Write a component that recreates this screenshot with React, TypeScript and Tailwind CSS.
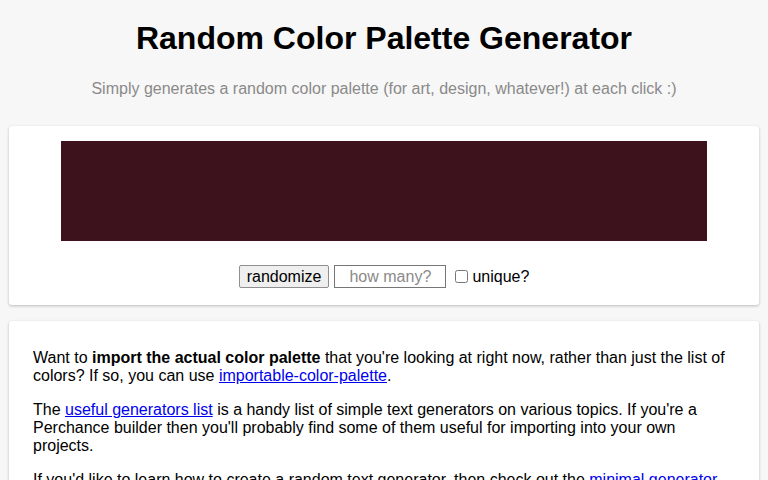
export default function App() {
  return (
    <div className="min-h-screen bg-[#f7f7f7] font-['Liberation_Sans',Arial,sans-serif] text-black">
      <h1 className="pt-[20px] text-center text-[32px] font-bold leading-[37px]">
        Random Color Palette Generator
      </h1>
      <p className="mt-[23px] text-center text-[16px] leading-[18px] text-[#8a8a8a]">
        Simply generates a random color palette (for art, design, whatever!) at each click :)
      </p>

      {/* palette card */}
      <div className="mx-[9px] mt-[28px] rounded-[3px] bg-white pt-[15px] pb-[17px] shadow-[0_1px_3px_rgba(0,0,0,0.25)]">
        <div className="mx-auto h-[100px] w-[646px] bg-[#3e121d]" />
        <div className="mt-[24px] flex items-center justify-center text-[16px]">
          <button className="h-[23px] rounded-[2px] border border-[#8f8f8f] bg-[#efefef] px-[7px] leading-[18px]">
            randomize
          </button>
          <input
            placeholder="how many?"
            className="ml-[5px] h-[23px] w-[112px] border border-[#767676] bg-white px-[2px] text-center text-[16px] placeholder:text-[#8a8a8a]"
          />
          <input type="checkbox" className="ml-[9px] h-[13px] w-[13px]" />
          <span className="ml-[4px] leading-[18px]">unique?</span>
        </div>
      </div>

      {/* info card */}
      <div className="mx-[9px] mt-[16px] rounded-[3px] bg-white px-[24px] pt-[28px] pb-[24px] text-[16px] leading-[18px] shadow-[0_1px_3px_rgba(0,0,0,0.25)]">
        <p>
          Want to <b>import the actual color palette</b> that you're looking at right now, rather than just the list of
          colors? If so, you can use{" "}
          <a href="#" className="text-[#0000ee] underline">
            importable-color-palette
          </a>
          .
        </p>
        <p className="mt-[16px]">
          The{" "}
          <a href="#" className="text-[#0000ee] underline">
            useful generators list
          </a>{" "}
          is a handy list of simple text generators on various topics. If you're a Perchance builder then you'll
          probably find some of them useful for importing into your own projects.
        </p>
        <p className="mt-[16px]">
          If you'd like to learn how to create a random text generator, then check out the{" "}
          <a href="#" className="text-[#0000ee] underline">
            minimal generator
          </a>{" "}
          and the tutorial.
        </p>
      </div>
    </div>
  );
}
